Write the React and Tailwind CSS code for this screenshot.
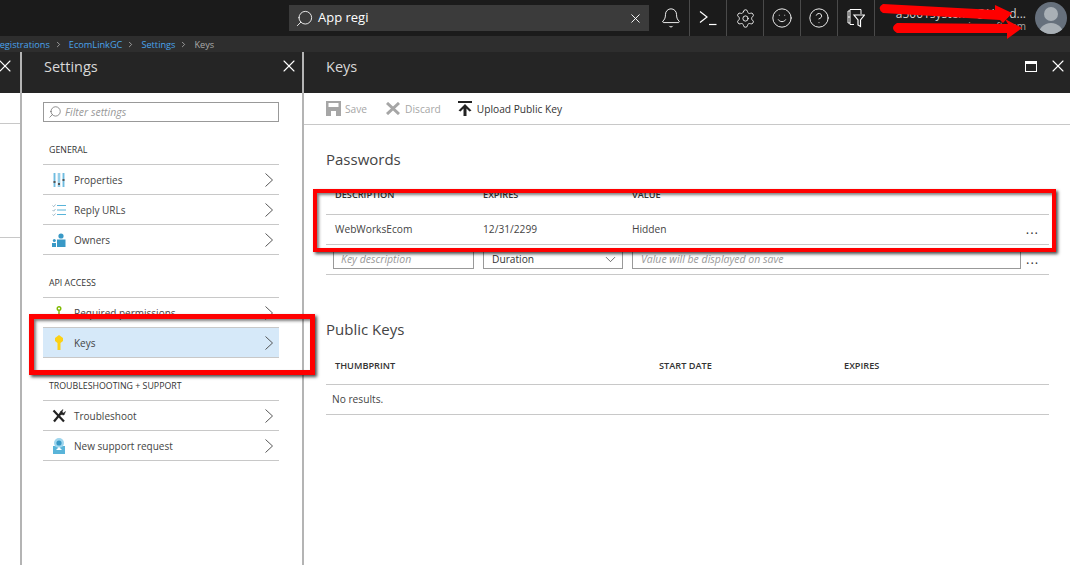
import { Bell, Settings, Smile, CircleHelp, X, ChevronRight, ChevronDown, Search } from 'lucide-react'

const font = { fontFamily: '"Open Sans", sans-serif' }

function TerminalIcon() {
  return (
    <svg width="18" height="16" viewBox="0 0 18 16" fill="none" stroke="#fff" strokeWidth="1.2">
      <path d="M1 1.5 L8 7 L1 12.5" />
      <path d="M10 14.5 H17.5" />
    </svg>
  )
}

function DirectoryFilterIcon() {
  return (
    <svg width="18" height="20" viewBox="0 0 18 20" fill="none" stroke="#fff" strokeWidth="1">
      <path d="M3 1.5 H14 V6 M3 1.5 V16.5 H7" />
      <path d="M1 3 V15 M1 3 H3 M1 15 H3 M1 9 H3" />
      <path d="M7 7 H17.5 L13.5 12 V18.5 L11 17 V12 Z" strokeWidth="1.2" />
    </svg>
  )
}

function PropertiesIcon() {
  return (
    <svg width="14" height="14" viewBox="0 0 14 14">
      <rect x="1" y="0" width="3" height="14" fill="#bfe0f2" />
      <rect x="5.5" y="0" width="3" height="14" fill="#bfe0f2" />
      <rect x="10" y="0" width="3" height="14" fill="#bfe0f2" />
      <path d="M2.5 0 V14 M7 0 V14 M11.5 0 V14" stroke="#59b4d9" strokeWidth="0.8" />
      <rect x="1.5" y="8" width="2" height="2" fill="#555" />
      <rect x="6" y="10" width="2" height="2" fill="#555" />
      <rect x="10.5" y="6" width="2" height="2" fill="#555" />
    </svg>
  )
}

function ReplyIcon() {
  return (
    <svg width="14" height="12" viewBox="0 0 14 12" fill="none" stroke="#59b4d9">
      <path d="M5 1.5 H14 M5 6 H14 M5 10.5 H14" />
      <path d="M0.5 1.5 L1.7 2.7 L3.5 0.5 M0.5 6 L1.7 7.2 L3.5 5 M0.5 10.5 L1.7 11.5 L3.5 9.5" strokeWidth="0.7" stroke="#7a9cb0" />
    </svg>
  )
}

function OwnersIcon() {
  return (
    <svg width="14" height="14" viewBox="0 0 14 14" fill="#3999c6">
      <circle cx="9" cy="3" r="2.6" />
      <path d="M5 6.5 H13.5 V14 H5 Z" />
      <circle cx="2.3" cy="7.5" r="1.5" />
      <path d="M0 10 H4 V14 H0 Z" />
    </svg>
  )
}

function PermissionIcon() {
  return (
    <svg width="12" height="14" viewBox="0 0 12 14" fill="none" stroke="#7fba00" strokeWidth="1.4">
      <circle cx="6" cy="2.5" r="1.8" />
      <path d="M6 4 V10 M2 11 H10" />
    </svg>
  )
}

function KeyIcon() {
  return (
    <svg width="10" height="15" viewBox="0 0 10 15" fill="#fcd116">
      <path d="M5 0 L9 3 V6 L6.5 8 V15 H3.5 V8 L1 6 V3 Z" />
    </svg>
  )
}

function WrenchIcon() {
  return (
    <svg width="14" height="14" viewBox="0 0 14 14" stroke="#222" fill="none">
      <path d="M2 12.5 L9 4" strokeWidth="2.2" />
      <path d="M1.5 1.5 L12 12.5" strokeWidth="2.2" />
      <path d="M8 3 L11 0.5 L10 3 L11.5 4 L13.5 2.5 L12 6 L9 5.5 Z" fill="#222" strokeWidth="0.5" />
    </svg>
  )
}

function SupportIcon() {
  return (
    <svg width="12" height="16" viewBox="0 0 12 16">
      <rect x="0" y="8" width="12" height="8" fill="#59b4d9" />
      <circle cx="6" cy="5" r="5" fill="#9fd6ee" />
      <circle cx="6" cy="5" r="2.6" fill="#3999c6" />
      <path d="M3 12 L6 9 L9 12 Z" fill="#fff" />
    </svg>
  )
}

function SaveIcon() {
  return (
    <svg width="15" height="15" viewBox="0 0 15 15" fill="#a6a6a6">
      <path d="M0 0 H15 V15 H0 Z M2.5 2 V6 H12.5 V2 Z M5 10 V15 H10 V10 Z" fillRule="evenodd" />
    </svg>
  )
}

function DiscardIcon() {
  return (
    <svg width="14" height="13" viewBox="0 0 14 13" stroke="#a6a6a6" strokeWidth="3">
      <path d="M1 1 L13 12 M13 1 L1 12" />
    </svg>
  )
}

function UploadIcon() {
  return (
    <svg width="14" height="15" viewBox="0 0 14 15" fill="#222">
      <rect x="0" y="0" width="14" height="2" />
      <path d="M7 3 L13.5 9.5 L11.5 10.5 L8.5 7.5 V15 H5.5 V7.5 L2.5 10.5 L0.5 9.5 Z" />
    </svg>
  )
}

function RowChevron() {
  return (
    <svg width="8" height="14" viewBox="0 0 8 14" fill="none" stroke="#444" strokeWidth="0.9" className="mr-[6px]">
      <path d="M0.5 0.5 L7.5 7 L0.5 13.5" />
    </svg>
  )
}

function TopIcon({ children }) {
  return (
    <div className="w-[37px] h-full flex items-center justify-center border-r border-[#4a4a4a]">
      {children}
    </div>
  )
}

function MenuRow({ icon, label, active }) {
  return (
    <div className={`h-[30px] flex items-center border-b border-[#c8c8c8] ${active ? 'bg-[#d6e9f9]' : ''}`}>
      <div className="w-[31px] flex justify-center shrink-0">{icon}</div>
      <span className="flex-1 text-[10px] text-[#444] pt-[1px]">{label}</span>
      <RowChevron />
    </div>
  )
}

function MenuSection({ title, className, children }) {
  return (
    <div className={className}>
      <div className="h-[19px] pl-[6px] text-[8.8px] leading-[10px] text-[#333] uppercase">{title}</div>
      <div className="border-t border-[#c8c8c8]">{children}</div>
    </div>
  )
}

export default function App() {
  return (
    <div className="relative w-[1070px] h-[565px] overflow-hidden bg-white flex flex-col" style={font}>
      {/* top bar */}
      <div className="h-[36px] bg-[#1b1b1b] flex items-center shrink-0">
        <div className="ml-[289px] w-[360px] h-[26px] bg-[#3b3b3b] flex items-center pl-[6px] pr-[6px]">
          <Search size={19} strokeWidth={1.1} className="text-white -scale-x-100" />
          <span className="ml-[4px] flex-1 text-[13px] text-white">App regi</span>
          <X size={15} strokeWidth={1.5} className="text-white" />
        </div>
        <div className="ml-[4px] h-full flex">
          <TopIcon><Bell size={22} strokeWidth={1} className="text-white" /></TopIcon>
          <TopIcon><TerminalIcon /></TopIcon>
          <TopIcon><Settings size={21} strokeWidth={1} className="text-white" /></TopIcon>
          <TopIcon><Smile size={22} strokeWidth={1} className="text-white" /></TopIcon>
          <TopIcon><CircleHelp size={22} strokeWidth={1} className="text-white" /></TopIcon>
          <TopIcon><DirectoryFilterIcon /></TopIcon>
        </div>
        <div className="flex-1 text-right pr-[9px] leading-[12px] translate-y-[2px]">
          <div className="text-[12px] text-[#d0d0d0] whitespace-nowrap">a5001systems@Hood...</div>
          <div className="text-[10px] text-[#a8a8a8] whitespace-nowrap">onmicrosoft.com</div>
        </div>
        <div className="w-[32px] h-[32px] mr-[3px] rounded-full bg-[#66707c] overflow-hidden flex flex-col items-center shrink-0">
          <div className="w-[14px] h-[14px] rounded-full bg-[#a9b0b6] mt-[5px] shrink-0" />
          <div className="w-[26px] h-[14px] rounded-t-full bg-[#a9b0b6] mt-[2px] shrink-0" />
        </div>
      </div>

      {/* breadcrumb */}
      <div className="h-[16px] bg-[#2e2e2e] flex items-center shrink-0 text-[9.2px] text-[#4aa3eb] whitespace-nowrap -ml-[6px] pt-[1px]">
        <span>Registrations</span>
        <ChevronRight size={9} className="text-[#bbb] mx-[4px]" />
        <span className="ml-[2px]">EcomLinkGC</span>
        <ChevronRight size={9} className="text-[#bbb] mx-[4px]" />
        <span className="ml-[2px]">Settings</span>
        <ChevronRight size={9} className="text-[#bbb] mx-[4px]" />
        <span className="ml-[2px] text-[#aaa]">Keys</span>
      </div>

      {/* blades */}
      <div className="flex-1 flex min-h-0">
        <div className="w-[20px] shrink-0 flex flex-col">
          <div className="h-[41px] bg-[#252525] flex items-start justify-end pr-[5px] pt-[4px] overflow-hidden">
            <X size={20} strokeWidth={1.3} className="text-white shrink-0" />
          </div>
          <div className="h-[31px] border-b border-[#c8c8c8]" />
          <div className="h-[114px] border-b border-[#c8c8c8]" />
        </div>

        <div className="w-[284px] shrink-0 flex flex-col border-x-2 border-[#b4b4b4] relative">
          <div className="h-[41px] bg-[#252525] flex items-start justify-between pl-[22px] pr-[3px] pt-[4px] shrink-0">
            <span className="text-[14.5px] leading-[20px] pt-[1px] text-[#d8d8d8]">Settings</span>
            <X size={20} strokeWidth={1.3} className="text-white" />
          </div>
          <div className="pl-[21px] pr-[23px]">
            <div className="mt-[9px] h-[20px] border border-[#999] flex items-center pl-[4px]">
              <Search size={14} strokeWidth={1.1} className="text-[#555] -scale-x-100" />
              <span className="ml-[3px] pt-[1px] text-[10.5px] italic text-[#999]">Filter settings</span>
            </div>
            <MenuSection title="General" className="mt-[23px]">
              <MenuRow icon={<PropertiesIcon />} label="Properties" />
              <MenuRow icon={<ReplyIcon />} label="Reply URLs" />
              <MenuRow icon={<OwnersIcon />} label="Owners" />
            </MenuSection>
            <MenuSection title="API Access" className="mt-[23px]">
              <MenuRow icon={<PermissionIcon />} label="Required permissions" />
              <MenuRow icon={<KeyIcon />} label="Keys" active />
            </MenuSection>
            <MenuSection title="Troubleshooting + Support" className="mt-[23px]">
              <MenuRow icon={<WrenchIcon />} label="Troubleshoot" />
              <MenuRow icon={<SupportIcon />} label="New support request" />
            </MenuSection>
          </div>
        </div>

        <div className="flex-1 flex flex-col min-w-0">
          <div className="h-[41px] bg-[#252525] flex items-start pl-[22px] pr-[2px] pt-[4px] shrink-0">
            <span className="flex-1 text-[14.5px] leading-[20px] pt-[1px] text-[#d8d8d8]">Keys</span>
            <div className="w-[12px] h-[11px] mt-[5px] border border-white border-t-[3px] mr-[11px]" />
            <X size={20} strokeWidth={1.3} className="text-white" />
          </div>
          <div className="h-[32px] border-b border-[#c8c8c8] flex items-center pl-[22px] text-[10.2px] shrink-0">
            <SaveIcon />
            <span className="ml-[4px] text-[#a6a6a6] translate-y-[1px]">Save</span>
            <span className="ml-[19px]"><DiscardIcon /></span>
            <span className="ml-[5px] text-[#a6a6a6] translate-y-[1px]">Discard</span>
            <span className="ml-[17px]"><UploadIcon /></span>
            <span className="ml-[5px] text-[#333] translate-y-[1px]">Upload Public Key</span>
          </div>
          <div className="pl-[22px] pr-[21px] text-[10.2px] text-[#444]">
            <h2 className="mt-[24px] h-[20px] leading-[20px] text-[15px] text-[#444]">Passwords</h2>
            <div className="mt-[17px] h-[29px] grid grid-cols-[157px_149px_1fr] items-center border-b border-[#c8c8c8] text-[9.2px] font-semibold text-[#333] pb-[10px]">
              <span className="pl-[9px]">DESCRIPTION</span>
              <span>EXPIRES</span>
              <span>VALUE</span>
            </div>
            <div className="h-[30px] grid grid-cols-[157px_149px_1fr] items-center border-b border-[#c8c8c8]">
              <span className="pl-[9px]">WebWorksEcom</span>
              <span>12/31/2299</span>
              <div className="flex items-center justify-between pr-[10px]">
                <span>Hidden</span>
                <span className="text-[13px] leading-[13px] text-[#333] tracking-[1px]">...</span>
              </div>
            </div>
            <div className="h-[30px] pt-[5px] grid grid-cols-[157px_149px_1fr] border-b border-[#c8c8c8]">
              <div className="pl-[7px] pr-[9px]">
                <div className="h-[19px] border border-[#999] pl-[7px] text-[10.5px] leading-[17px] italic text-[#999]">Key description</div>
              </div>
              <div className="pr-[9px]">
                <div className="h-[19px] border border-[#999] pl-[8px] pr-[3px] flex items-center justify-between text-[#333]">
                  <span>Duration</span>
                  <ChevronDown size={17} strokeWidth={1} />
                </div>
              </div>
              <div className="flex items-start">
                <div className="flex-1 h-[19px] border border-[#999] pl-[8px] text-[10.5px] leading-[17px] italic text-[#999]">Value will be displayed on save</div>
                <span className="w-[28px] pl-[5px] text-[13px] leading-[19px] text-[#333] tracking-[1px]">...</span>
              </div>
            </div>
            <h2 className="mt-[44px] h-[20px] leading-[20px] text-[15px] text-[#444]">Public Keys</h2>
            <div className="mt-[12px] h-[34px] pb-[3px] grid grid-cols-[333px_185px_1fr] items-center border-b border-[#c8c8c8] text-[9.2px] font-semibold text-[#333]">
              <span className="pl-[9px]">THUMBPRINT</span>
              <span>START DATE</span>
              <span>EXPIRES</span>
            </div>
            <div className="h-[30px] flex items-center border-b border-[#c8c8c8] pl-[6px] pt-[1px]">No results.</div>
          </div>
        </div>
      </div>

      {/* red annotations drawn on the screenshot */}
      <div className="absolute left-[29px] top-[314px] w-[286px] h-[61px] border-[5px] border-[#ff0000] shadow-[2px_2px_3px_rgba(0,0,0,0.7),inset_2px_2px_3px_rgba(0,0,0,0.5)]" />
      <div className="absolute left-[313px] top-[189px] w-[743px] h-[63px] border-4 border-[#ff0000] shadow-[2px_2px_3px_rgba(0,0,0,0.7),inset_2px_2px_3px_rgba(0,0,0,0.5)]" />
      <svg className="absolute left-[870px] top-0" width="170" height="42" viewBox="0 0 170 42" fill="#ff0000">
        <path d="M13 4 L125 10 L125 5 L142 13 L133 23 L130 20 L13 13 Q6 8 13 4 Z" />
        <path d="M27 23 L138 24 L135 19 L152 28 L137 39 L137 33 L27 33 Q19 28 27 23 Z" />
      </svg>
    </div>
  )
}
